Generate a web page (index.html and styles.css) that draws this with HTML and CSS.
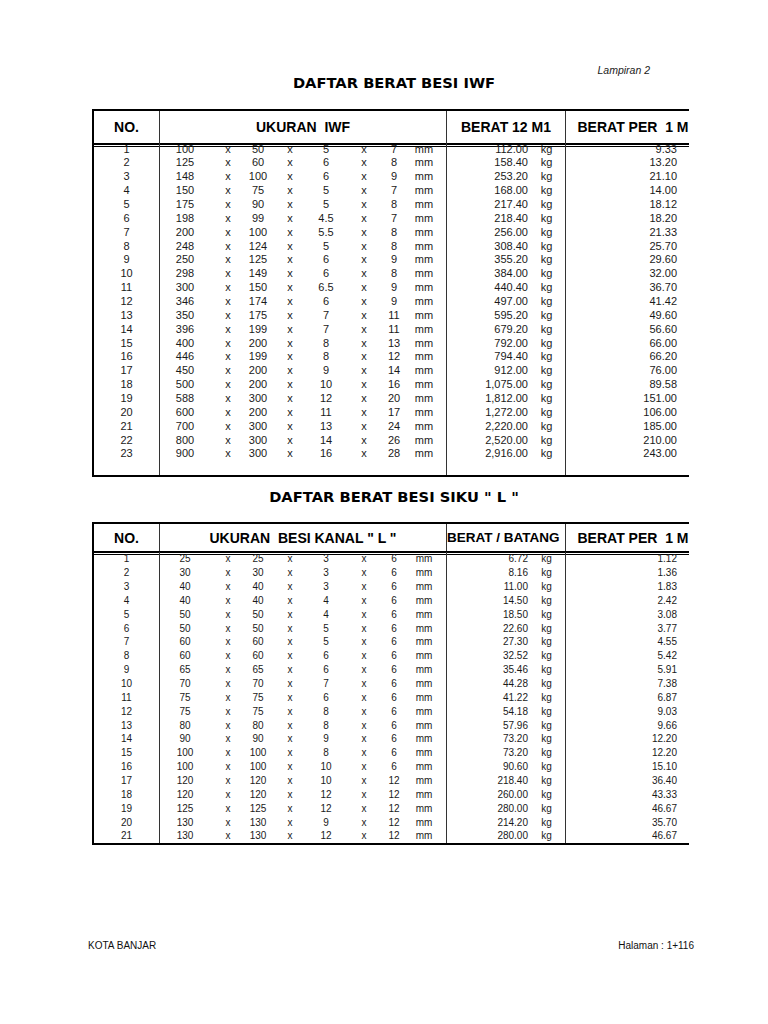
FILE: index.html
```html
<!DOCTYPE html>
<html lang="id">
<head>
<meta charset="utf-8">
<title>Daftar Berat Besi</title>
<link rel="stylesheet" href="styles.css">
</head>
<body>
<div class="page">
  <div class="lampiran">Lampiran 2</div>
  <h1 class="title">DAFTAR BERAT BESI IWF</h1>

  <div class="sheet sheet1">
    <div class="tbl t1">
      <div class="head">
        <span class="hno">NO.</span>
        <span class="hsize">UKURAN&nbsp; IWF</span>
        <span class="hwt">BERAT 12 M1</span>
        <span class="hper">BERAT PER&nbsp; 1 M</span>
      </div>
      <div class="body">
        <div class="row"><span class="no">1</span><span>100</span><span>x</span><span>50</span><span>x</span><span>5</span><span>x</span><span>7</span><span class="mm">mm</span><span class="wt">112.00</span><span class="kg">kg</span><span class="per">9.33</span></div>
        <div class="row"><span class="no">2</span><span>125</span><span>x</span><span>60</span><span>x</span><span>6</span><span>x</span><span>8</span><span class="mm">mm</span><span class="wt">158.40</span><span class="kg">kg</span><span class="per">13.20</span></div>
        <div class="row"><span class="no">3</span><span>148</span><span>x</span><span>100</span><span>x</span><span>6</span><span>x</span><span>9</span><span class="mm">mm</span><span class="wt">253.20</span><span class="kg">kg</span><span class="per">21.10</span></div>
        <div class="row"><span class="no">4</span><span>150</span><span>x</span><span>75</span><span>x</span><span>5</span><span>x</span><span>7</span><span class="mm">mm</span><span class="wt">168.00</span><span class="kg">kg</span><span class="per">14.00</span></div>
        <div class="row"><span class="no">5</span><span>175</span><span>x</span><span>90</span><span>x</span><span>5</span><span>x</span><span>8</span><span class="mm">mm</span><span class="wt">217.40</span><span class="kg">kg</span><span class="per">18.12</span></div>
        <div class="row"><span class="no">6</span><span>198</span><span>x</span><span>99</span><span>x</span><span>4.5</span><span>x</span><span>7</span><span class="mm">mm</span><span class="wt">218.40</span><span class="kg">kg</span><span class="per">18.20</span></div>
        <div class="row"><span class="no">7</span><span>200</span><span>x</span><span>100</span><span>x</span><span>5.5</span><span>x</span><span>8</span><span class="mm">mm</span><span class="wt">256.00</span><span class="kg">kg</span><span class="per">21.33</span></div>
        <div class="row"><span class="no">8</span><span>248</span><span>x</span><span>124</span><span>x</span><span>5</span><span>x</span><span>8</span><span class="mm">mm</span><span class="wt">308.40</span><span class="kg">kg</span><span class="per">25.70</span></div>
        <div class="row"><span class="no">9</span><span>250</span><span>x</span><span>125</span><span>x</span><span>6</span><span>x</span><span>9</span><span class="mm">mm</span><span class="wt">355.20</span><span class="kg">kg</span><span class="per">29.60</span></div>
        <div class="row"><span class="no">10</span><span>298</span><span>x</span><span>149</span><span>x</span><span>6</span><span>x</span><span>8</span><span class="mm">mm</span><span class="wt">384.00</span><span class="kg">kg</span><span class="per">32.00</span></div>
        <div class="row"><span class="no">11</span><span>300</span><span>x</span><span>150</span><span>x</span><span>6.5</span><span>x</span><span>9</span><span class="mm">mm</span><span class="wt">440.40</span><span class="kg">kg</span><span class="per">36.70</span></div>
        <div class="row"><span class="no">12</span><span>346</span><span>x</span><span>174</span><span>x</span><span>6</span><span>x</span><span>9</span><span class="mm">mm</span><span class="wt">497.00</span><span class="kg">kg</span><span class="per">41.42</span></div>
        <div class="row"><span class="no">13</span><span>350</span><span>x</span><span>175</span><span>x</span><span>7</span><span>x</span><span>11</span><span class="mm">mm</span><span class="wt">595.20</span><span class="kg">kg</span><span class="per">49.60</span></div>
        <div class="row"><span class="no">14</span><span>396</span><span>x</span><span>199</span><span>x</span><span>7</span><span>x</span><span>11</span><span class="mm">mm</span><span class="wt">679.20</span><span class="kg">kg</span><span class="per">56.60</span></div>
        <div class="row"><span class="no">15</span><span>400</span><span>x</span><span>200</span><span>x</span><span>8</span><span>x</span><span>13</span><span class="mm">mm</span><span class="wt">792.00</span><span class="kg">kg</span><span class="per">66.00</span></div>
        <div class="row"><span class="no">16</span><span>446</span><span>x</span><span>199</span><span>x</span><span>8</span><span>x</span><span>12</span><span class="mm">mm</span><span class="wt">794.40</span><span class="kg">kg</span><span class="per">66.20</span></div>
        <div class="row"><span class="no">17</span><span>450</span><span>x</span><span>200</span><span>x</span><span>9</span><span>x</span><span>14</span><span class="mm">mm</span><span class="wt">912.00</span><span class="kg">kg</span><span class="per">76.00</span></div>
        <div class="row"><span class="no">18</span><span>500</span><span>x</span><span>200</span><span>x</span><span>10</span><span>x</span><span>16</span><span class="mm">mm</span><span class="wt">1,075.00</span><span class="kg">kg</span><span class="per">89.58</span></div>
        <div class="row"><span class="no">19</span><span>588</span><span>x</span><span>300</span><span>x</span><span>12</span><span>x</span><span>20</span><span class="mm">mm</span><span class="wt">1,812.00</span><span class="kg">kg</span><span class="per">151.00</span></div>
        <div class="row"><span class="no">20</span><span>600</span><span>x</span><span>200</span><span>x</span><span>11</span><span>x</span><span>17</span><span class="mm">mm</span><span class="wt">1,272.00</span><span class="kg">kg</span><span class="per">106.00</span></div>
        <div class="row"><span class="no">21</span><span>700</span><span>x</span><span>300</span><span>x</span><span>13</span><span>x</span><span>24</span><span class="mm">mm</span><span class="wt">2,220.00</span><span class="kg">kg</span><span class="per">185.00</span></div>
        <div class="row"><span class="no">22</span><span>800</span><span>x</span><span>300</span><span>x</span><span>14</span><span>x</span><span>26</span><span class="mm">mm</span><span class="wt">2,520.00</span><span class="kg">kg</span><span class="per">210.00</span></div>
        <div class="row"><span class="no">23</span><span>900</span><span>x</span><span>300</span><span>x</span><span>16</span><span>x</span><span>28</span><span class="mm">mm</span><span class="wt">2,916.00</span><span class="kg">kg</span><span class="per">243.00</span></div>
        <div class="row spacer"><span class="no"></span><span class="sp-size"></span><span class="sp-wt"></span><span></span></div>
      </div>
    </div>
  </div>

  <h1 class="title title2">DAFTAR BERAT BESI SIKU &quot; L &quot;</h1>

  <div class="sheet sheet2">
    <div class="tbl t2">
      <div class="head">
        <span class="hno">NO.</span>
        <span class="hsize">UKURAN&nbsp; BESI KANAL &quot; L &quot;</span>
        <span class="hwt">BERAT / BATANG</span>
        <span class="hper">BERAT PER&nbsp; 1 M</span>
      </div>
      <div class="body">
        <div class="row"><span class="no">1</span><span>25</span><span>x</span><span>25</span><span>x</span><span>3</span><span>x</span><span>6</span><span class="mm">mm</span><span class="wt">6.72</span><span class="kg">kg</span><span class="per">1.12</span></div>
        <div class="row"><span class="no">2</span><span>30</span><span>x</span><span>30</span><span>x</span><span>3</span><span>x</span><span>6</span><span class="mm">mm</span><span class="wt">8.16</span><span class="kg">kg</span><span class="per">1.36</span></div>
        <div class="row"><span class="no">3</span><span>40</span><span>x</span><span>40</span><span>x</span><span>3</span><span>x</span><span>6</span><span class="mm">mm</span><span class="wt">11.00</span><span class="kg">kg</span><span class="per">1.83</span></div>
        <div class="row"><span class="no">4</span><span>40</span><span>x</span><span>40</span><span>x</span><span>4</span><span>x</span><span>6</span><span class="mm">mm</span><span class="wt">14.50</span><span class="kg">kg</span><span class="per">2.42</span></div>
        <div class="row"><span class="no">5</span><span>50</span><span>x</span><span>50</span><span>x</span><span>4</span><span>x</span><span>6</span><span class="mm">mm</span><span class="wt">18.50</span><span class="kg">kg</span><span class="per">3.08</span></div>
        <div class="row"><span class="no">6</span><span>50</span><span>x</span><span>50</span><span>x</span><span>5</span><span>x</span><span>6</span><span class="mm">mm</span><span class="wt">22.60</span><span class="kg">kg</span><span class="per">3.77</span></div>
        <div class="row"><span class="no">7</span><span>60</span><span>x</span><span>60</span><span>x</span><span>5</span><span>x</span><span>6</span><span class="mm">mm</span><span class="wt">27.30</span><span class="kg">kg</span><span class="per">4.55</span></div>
        <div class="row"><span class="no">8</span><span>60</span><span>x</span><span>60</span><span>x</span><span>6</span><span>x</span><span>6</span><span class="mm">mm</span><span class="wt">32.52</span><span class="kg">kg</span><span class="per">5.42</span></div>
        <div class="row"><span class="no">9</span><span>65</span><span>x</span><span>65</span><span>x</span><span>6</span><span>x</span><span>6</span><span class="mm">mm</span><span class="wt">35.46</span><span class="kg">kg</span><span class="per">5.91</span></div>
        <div class="row"><span class="no">10</span><span>70</span><span>x</span><span>70</span><span>x</span><span>7</span><span>x</span><span>6</span><span class="mm">mm</span><span class="wt">44.28</span><span class="kg">kg</span><span class="per">7.38</span></div>
        <div class="row"><span class="no">11</span><span>75</span><span>x</span><span>75</span><span>x</span><span>6</span><span>x</span><span>6</span><span class="mm">mm</span><span class="wt">41.22</span><span class="kg">kg</span><span class="per">6.87</span></div>
        <div class="row"><span class="no">12</span><span>75</span><span>x</span><span>75</span><span>x</span><span>8</span><span>x</span><span>6</span><span class="mm">mm</span><span class="wt">54.18</span><span class="kg">kg</span><span class="per">9.03</span></div>
        <div class="row"><span class="no">13</span><span>80</span><span>x</span><span>80</span><span>x</span><span>8</span><span>x</span><span>6</span><span class="mm">mm</span><span class="wt">57.96</span><span class="kg">kg</span><span class="per">9.66</span></div>
        <div class="row"><span class="no">14</span><span>90</span><span>x</span><span>90</span><span>x</span><span>9</span><span>x</span><span>6</span><span class="mm">mm</span><span class="wt">73.20</span><span class="kg">kg</span><span class="per">12.20</span></div>
        <div class="row"><span class="no">15</span><span>100</span><span>x</span><span>100</span><span>x</span><span>8</span><span>x</span><span>6</span><span class="mm">mm</span><span class="wt">73.20</span><span class="kg">kg</span><span class="per">12.20</span></div>
        <div class="row"><span class="no">16</span><span>100</span><span>x</span><span>100</span><span>x</span><span>10</span><span>x</span><span>6</span><span class="mm">mm</span><span class="wt">90.60</span><span class="kg">kg</span><span class="per">15.10</span></div>
        <div class="row"><span class="no">17</span><span>120</span><span>x</span><span>120</span><span>x</span><span>10</span><span>x</span><span>12</span><span class="mm">mm</span><span class="wt">218.40</span><span class="kg">kg</span><span class="per">36.40</span></div>
        <div class="row"><span class="no">18</span><span>120</span><span>x</span><span>120</span><span>x</span><span>12</span><span>x</span><span>12</span><span class="mm">mm</span><span class="wt">260.00</span><span class="kg">kg</span><span class="per">43.33</span></div>
        <div class="row"><span class="no">19</span><span>125</span><span>x</span><span>125</span><span>x</span><span>12</span><span>x</span><span>12</span><span class="mm">mm</span><span class="wt">280.00</span><span class="kg">kg</span><span class="per">46.67</span></div>
        <div class="row"><span class="no">20</span><span>130</span><span>x</span><span>130</span><span>x</span><span>9</span><span>x</span><span>12</span><span class="mm">mm</span><span class="wt">214.20</span><span class="kg">kg</span><span class="per">35.70</span></div>
        <div class="row"><span class="no">21</span><span>130</span><span>x</span><span>130</span><span>x</span><span>12</span><span>x</span><span>12</span><span class="mm">mm</span><span class="wt">280.00</span><span class="kg">kg</span><span class="per">46.67</span></div>
      </div>
    </div>
  </div>

  <div class="footer">
    <span>KOTA BANJAR</span>
    <span>Halaman : 1+116</span>
  </div>
</div>
</body>
</html>
```
FILE: styles.css
```css
* { box-sizing: border-box; }

body {
  margin: 0;
  background: #fff;
  color: #000;
  font-family: "Liberation Sans", Arial, sans-serif;
}

.page {
  width: 768px;
  padding-top: 64px;
}

.lampiran {
  width: 650px;
  text-align: right;
  font-style: italic;
  font-size: 10.5px;
  line-height: 12px;
  color: #222;
}

.title {
  margin: 0 0 0 93px;
  width: 602px;
  text-align: center;
  font-family: "DejaVu Sans", sans-serif;
  font-weight: bold;
  font-size: 14.7px;
  line-height: 14px;
}

.title2 { margin-top: 13px; }

.sheet {
  margin-left: 92px;
  width: 597px;
  overflow: hidden;
}

.sheet1 { margin-top: 19px; }
.sheet2 { margin-top: 18px; }

.tbl {
  width: 608px;
  border-top: 2px solid #000;
  border-left: 2px solid #000;
  border-bottom: 2px solid #000;
}

.head,
.row {
  display: grid;
  grid-template-columns: 66px 50px 36px 24px 40px 32px 44px 16px 45px 81px 38px 134px;
}

.head {
  border-bottom: 2px solid #000;
  box-shadow: 0 1px 0 #fff, 0 2px 0 #000;
  font-weight: bold;
  font-size: 14px;
  white-space: nowrap;
}

.t1 .head { height: 34px; }
.t2 .head { height: 29px; }

.head > span {
  display: flex;
  align-items: center;
  justify-content: center;
}

.hno { border-right: 1px solid #333; }
.hsize { grid-column: span 8; border-right: 1px solid #333; }
.hwt { grid-column: span 2; border-right: 1px solid #333; }

.t2 .head > .hwt {
  font-size: 13.5px;
  justify-content: flex-start;
}

.t1 .body { margin-top: -2.5px; }
.t2 .body { margin-top: -1px; }

.row {
  height: 13.86px;
  line-height: 13.86px;
  color: #1a1a1a;
}

.t1 .row { font-size: 11px; }
.t2 .row { font-size: 10px; }

.row > span {
  text-align: center;
  white-space: nowrap;
}

.no,
.mm,
.kg {
  border-right: 1px solid #333;
}

.row > .wt { text-align: right; }

.row > .per {
  text-align: right;
  padding-right: 23px;
}

.spacer { height: 14px; }
.sp-size { grid-column: span 8; border-right: 1px solid #333; }
.sp-wt { grid-column: span 2; border-right: 1px solid #333; }

.footer {
  display: flex;
  justify-content: space-between;
  margin: 95px 0 0 88px;
  width: 606px;
  font-size: 10px;
  line-height: 12px;
  color: #111;
}
```
